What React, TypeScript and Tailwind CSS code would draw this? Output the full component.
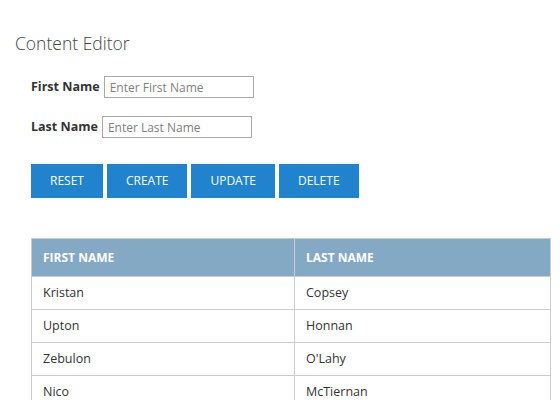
import React from 'react';

const rows = [
  { first: 'Kristan', last: 'Copsey' },
  { first: 'Upton', last: 'Honnan' },
  { first: 'Zebulon', last: "O'Lahy" },
  { first: 'Nico', last: 'McTiernan' },
];

const buttons = ['RESET', 'CREATE', 'UPDATE', 'DELETE'];

export default function App() {
  return (
    <div className="h-[400px] w-[560px] overflow-hidden bg-white pl-[15px] pt-[30px] font-['Open_Sans',sans-serif] text-[#333]">
      <h1 className="h-[26px] text-[17.5px] font-light leading-[26px] text-[#444]">Content Editor</h1>

      <div className="mt-[20px] flex flex-col gap-[18px] pl-[16px]">
        <div className="flex h-[22px] items-center gap-[4px]">
          <label className="text-[12.5px] font-bold">First Name</label>
          <input
            className="h-[22px] w-[150px] border border-[#a9a9a9] px-[5px] text-[12px] placeholder:text-[#808080] outline-none"
            placeholder="Enter First Name"
          />
        </div>
        <div className="flex h-[22px] items-center gap-[4px]">
          <label className="text-[12.5px] font-bold">Last Name</label>
          <input
            className="h-[22px] w-[150px] border border-[#a9a9a9] px-[5px] text-[12px] placeholder:text-[#808080] outline-none"
            placeholder="Enter Last Name"
          />
        </div>
      </div>

      <div className="mt-[26px] flex gap-[4px] pl-[16px]">
        {buttons.map(b => (
          <button key={b} className="h-[34px] bg-[#2183cd] px-[19px] text-[12px] text-white">
            {b}
          </button>
        ))}
      </div>

      <table className="ml-[16px] mt-[40px] w-[520px] border-collapse text-[12.5px]">
        <thead>
          <tr className="h-[38px] bg-[#84a9c4] text-left text-[12px] font-bold text-white">
            <th className="w-[263px] border border-[#ccc] px-[11px]">FIRST NAME</th>
            <th className="border border-[#ccc] px-[11px]">LAST NAME</th>
          </tr>
        </thead>
        <tbody>
          {rows.map(r => (
            <tr key={r.first} className="h-[33px]">
              <td className="border border-[#ccc] px-[11px]">{r.first}</td>
              <td className="border border-[#ccc] px-[11px]">{r.last}</td>
            </tr>
          ))}
        </tbody>
      </table>
    </div>
  );
}
